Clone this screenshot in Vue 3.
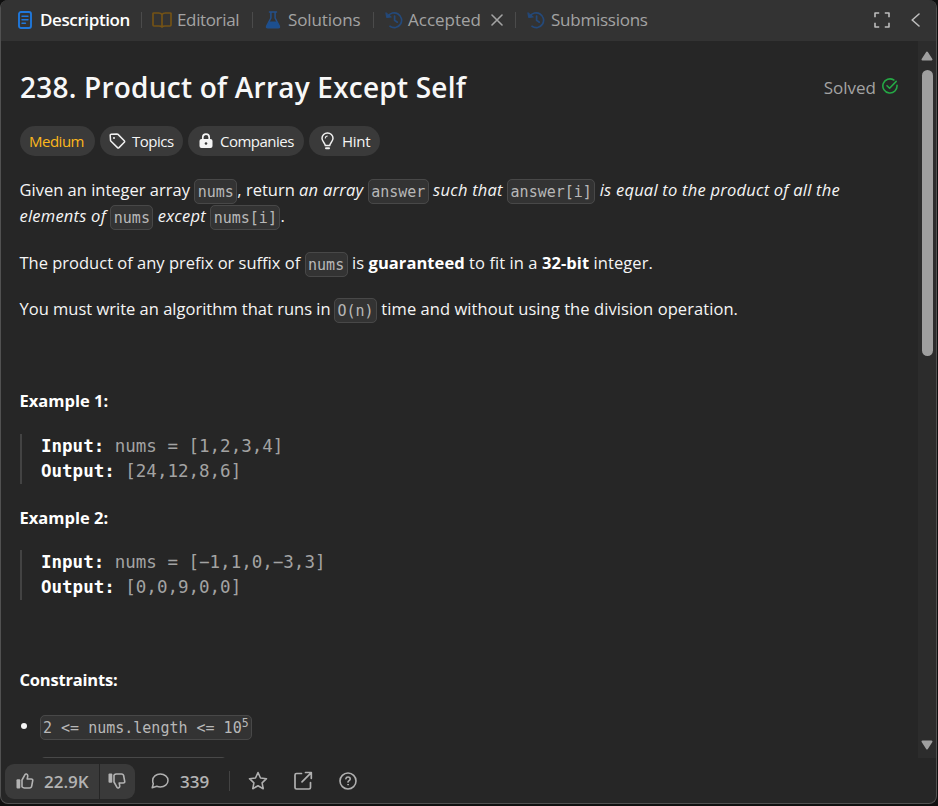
<script setup>
const tabs = [
  { id: 'description', label: 'Description', icon: 'doc', active: true },
  { id: 'editorial', label: 'Editorial', icon: 'book' },
  { id: 'solutions', label: 'Solutions', icon: 'flask' },
  { id: 'accepted', label: 'Accepted', icon: 'history', closable: true },
  { id: 'submissions', label: 'Submissions', icon: 'history' },
]
const examples = [
  { n: 1, input: 'nums = [1,2,3,4]', output: '[24,12,8,6]' },
  { n: 2, input: 'nums = [−1,1,0,−3,3]', output: '[0,0,9,0,0]' },
]
</script>

<template>
  <div class="page">
    <div class="panel">
      <header class="tabbar">
        <div v-for="t in tabs" :key="t.id" class="tab" :class="[t.id, { active: t.active }]">
          <svg v-if="t.icon === 'doc'" class="ic-doc" viewBox="0 0 14 18" fill="none" stroke="#1f78dc" stroke-width="1.9" stroke-linecap="round">
            <rect x="1" y="1" width="12" height="16" rx="2" />
            <path d="M4 5.2h6M4 8.7h6M4 12.2h3.5" stroke-width="1.4" />
          </svg>
          <svg v-else-if="t.icon === 'book'" class="ic-book" viewBox="0 0 20 16" fill="none" stroke="#745316" stroke-width="1.7" stroke-linejoin="round">
            <path d="M10 2.6C9.3 1.3 8 1 6.6 1H1.9Q1 1 1 1.9v11.2q0 .9.9.9h5c1.5 0 2.5.3 3.1 1.1.6-.8 1.6-1.1 3.1-1.1h5q.9 0 .9-.9V1.9Q19 1 18.1 1h-4.7C12 1 10.7 1.3 10 2.6ZM10 2.6V15" />
          </svg>
          <svg v-else-if="t.icon === 'flask'" class="ic-flask" viewBox="0 0 16 18">
            <path d="M4.500 1h7M5.900 1v6L1.700 15.200Q1.100 16.800 2.600 16.800h10.800q1.500 0 .9-1.600L10.100 7V1" fill="none" stroke="#24508a" stroke-width="1.500" stroke-linecap="round" stroke-linejoin="round" />
            <path d="M4.200 10.500h7.600l2.500 5q.3 1.300-.9 1.300H2.600q-1.200 0-.9-1.300Z" fill="#1c4f8f" />
          </svg>
          <svg v-else class="ic-history" viewBox="0 0 18 18" fill="none" stroke="#24497a" stroke-width="1.700" stroke-linecap="round" stroke-linejoin="round">
            <path d="M2.800 5.500A7.400 7.400 0 1 1 5 15.300" />
            <path d="M9.600 5v4.300l2.700 1.900" />
            <path d="M.9 2l.7 4.500 4.400-.5Z" fill="#24497a" stroke-width="1" />
          </svg>
          <span class="tab-label">{{ t.label }}</span>
          <svg v-if="t.closable" class="ic-close" viewBox="0 0 12 12" stroke="#a3a3a3" stroke-width="1.600" stroke-linecap="round"><path d="M1 1l10 10M11 1L1 11" /></svg>
        </div>
        <div class="tab-actions">
          <svg class="ic-full" viewBox="0 0 16 16" fill="none" stroke="#bdbdbd" stroke-width="1.600" stroke-linejoin="round"><path d="M1 5.200V1h4.200M10.800 1H15v4.200M15 10.800V15h-4.200M5.200 15H1v-4.200" /></svg>
          <svg class="ic-chev" viewBox="0 0 9 14" fill="none" stroke="#bdbdbd" stroke-width="1.600" stroke-linecap="round" stroke-linejoin="round"><path d="M8 1L1.200 7 8 13" /></svg>
        </div>
      </header>

      <div class="viewport">
        <main class="content">
          <div class="title-row">
            <h1>238. Product of Array Except Self</h1>
            <div class="solved">
              <span>Solved</span>
              <svg viewBox="0 0 16 16" fill="none" stroke="#25a845" stroke-width="1.600" stroke-linecap="round" stroke-linejoin="round"><path d="M11.800 2A7.100 7.100 0 1 0 15 7.200" /><path d="M5 7.700l2.600 2.600 6.600-6.900" /></svg>
            </div>
          </div>

          <div class="tags">
            <span class="tag medium">Medium</span>
            <span class="tag topics">
              <svg viewBox="0 0 17 17" fill="none" stroke="#f0f0f0" stroke-width="1.500" stroke-linejoin="round"><path d="M2 1.300l6-.3q.6 0 1 .4l6.300 6.300q.7.8 0 1.500L10 14.600q-.8.700-1.500 0L2 8.300q-.4-.4-.5-1L1.200 2.200Q1.200 1.300 2 1.300Z" /><circle cx="5" cy="4.900" r="1" fill="#f0f0f0" stroke="none" /></svg>
              Topics
            </span>
            <span class="tag companies">
              <svg viewBox="0 0 14 16"><path d="M3.800 7V4.300a3.200 3.200 0 0 1 6.400 0V7" fill="none" stroke="#f5f5f5" stroke-width="1.700" /><rect x=".5" y="6" width="13" height="9" rx="2" fill="#f5f5f5" /><circle cx="7" cy="10.500" r="1.300" fill="#3a3a3a" /></svg>
              Companies
            </span>
            <span class="tag hint">
              <svg viewBox="0 0 13 18" fill="none" stroke="#f0f0f0" stroke-width="1.500" stroke-linecap="round"><path d="M4.300 13.600C4.100 11 1 9.600 1 6.200a5.500 5.200 0 0 1 11 0c0 3.400-3.100 4.800-3.300 7.400Z" stroke-linejoin="round" /><path d="M4.300 6A2.300 2.300 0 0 1 6.200 4" stroke-width="1.200" /><path d="M5 16.300h3" stroke-width="2" /></svg>
              Hint
            </span>
          </div>

          <article class="prose">
            <p>Given an integer array <code>nums</code>, return <em>an array</em> <code>answer</code> <em>such that</em> <code>answer[i]</code> <em>is equal to the product of all the<br />elements of</em> <code>nums</code> <em>except</em> <code>nums[i]</code>.</p>
            <p>The product of any prefix or suffix of <code>nums</code> <span class="wide">is <strong>guaranteed</strong> to fit in a <strong>32-bit</strong> integer.</span></p>
            <p>You must write an algorithm that runs in <code class="tight">O(n)</code> <span class="wide">time and without using the division operation.</span></p>
            <p>&nbsp;</p>
            <template v-for="e in examples" :key="e.n">
              <p><strong>Example {{ e.n }}:</strong></p>
              <pre><strong>Input:</strong> {{ e.input }}
<strong>Output:</strong> {{ e.output }}</pre>
            </template>
            <p>&nbsp;</p>
            <p><strong class="heading">Constraints:</strong></p>
            <ul>
              <li><code>2 &lt;= nums.length &lt;= 10<sup>5</sup></code></li>
              <li><code>-30 &lt;= nums[i] &lt;= 30</code></li>
            </ul>
          </article>
        </main>
        <div class="scrollbar">
          <svg class="arrow" viewBox="0 0 12 10"><path d="M6 1.500L10.500 8.500h-9Z" fill="#9f9f9f" stroke="#9f9f9f" stroke-width="2" stroke-linejoin="round" /></svg>
          <div class="thumb"></div>
          <svg class="arrow down" viewBox="0 0 12 10"><path d="M6 8.500L10.500 1.500h-9Z" fill="#9f9f9f" stroke="#9f9f9f" stroke-width="2" stroke-linejoin="round" /></svg>
        </div>
      </div>

      <footer class="footer">
        <div class="votes">
          <button class="up">
            <svg viewBox="0 0 18 16"><path d="M6 7l3-5.300q.5-.9 1.500-.6 1.500.5 1.200 2.200L11.200 6h4q1.800 0 1.500 1.700l-1 5.300q-.3 2-2.200 2H8.500Q7 15 6 13.800Z" fill="none" stroke="#b3b3b3" stroke-width="1.600" stroke-linejoin="round" /><rect x=".5" y="6.300" width="3.800" height="9.200" rx="1" fill="#b3b3b3" /></svg>
            <span>22.9K</span>
          </button>
          <button class="down-vote">
            <svg viewBox="0 0 18 16"><path d="M6 9l3 5.300q.5.900 1.500.6 1.500-.5 1.200-2.200L11.200 10h4q1.800 0 1.500-1.700l-1-5.300q-.3-2-2.200-2H8.500Q7 1 6 2.200Z" fill="none" stroke="#b3b3b3" stroke-width="1.600" stroke-linejoin="round" /><rect x=".5" y=".5" width="3.800" height="9.200" rx="1" fill="#b3b3b3" /></svg>
          </button>
        </div>
        <div class="comments">
          <svg viewBox="0 0 18 16" fill="none" stroke="#b0b0b0" stroke-width="1.500" stroke-linejoin="round"><path d="M2.300 10.700A7 6.400 0 0 1 1.700 7.400C1.700 3.800 5 1 9.300 1S17 3.800 17 7.500s-3.400 6.500-7.700 6.500q-1.800 0-3.500-.7L1.200 14.700Z" /></svg>
          <span>339</span>
        </div>
        <div class="rule"></div>
        <div class="actions">
          <svg viewBox="0 0 20 20" fill="none" stroke="#b0b0b0" stroke-width="1.600" stroke-linejoin="round"><path d="M10 1.500l2.500 5.500 6 .7-4.400 4.100 1.100 5.900L10 14.800l-5.200 2.900 1.100-5.900L1.500 7.700l6-.7Z" /></svg>
          <svg viewBox="0 0 20 20" fill="none" stroke="#b0b0b0" stroke-width="1.700" stroke-linecap="round" stroke-linejoin="round"><path d="M8.500 2.500H3.500Q2 2.500 2 4v12.500Q2 18 3.500 18H16q1.500 0 1.500-1.500v-5M12.500 1.500H18.300V7.300M18 1.800L9 10.800" /></svg>
          <svg viewBox="0 0 20 20" fill="none" stroke="#b0b0b0" stroke-width="1.600" stroke-linecap="round"><circle cx="10" cy="10" r="8" /><path d="M7.900 7.700c.2-1.200 1-1.700 2.100-1.700s2.200.7 2.200 1.900c0 1.600-2.200 1.700-2.200 3.200" /><circle cx="10" cy="13.700" r=".4" fill="#b0b0b0" stroke-width="1" /></svg>
        </div>
      </footer>
    </div>
  </div>
</template>

<style>
body {
  background: #0f0f0f;
}
</style>

<style scoped>
.page {
  box-sizing: border-box;
  width: 938px;
  height: 806px;
  padding: 0 1px 2px 0;
  overflow: hidden;
  font-family: "Open Sans", "Noto Sans", sans-serif;
  color: #f5f5f5;
}
.panel {
  box-sizing: border-box;
  height: 804px;
  display: flex;
  flex-direction: column;
  border: 1px solid #515151;
  border-top: 0;
  border-radius: 8px;
  background: #262626;
  overflow: hidden;
}
svg {
  display: block;
  flex: none;
}
.tabbar {
  display: flex;
  align-items: center;
  height: 41px;
  flex: none;
  box-sizing: border-box;
  padding: 0 16px 2px 17px;
  background: #333;
}
.tab {
  display: flex;
  align-items: center;
  font-size: 17px;
  line-height: 24px;
  color: #a3a3a3;
}
.tab + .tab::before {
  content: "";
  width: 1px;
  height: 16px;
  background: #4b4b4b;
}
.active {
  font-weight: 600;
  color: #fff;
}
.tab-label {
  white-space: nowrap;
}
.description .tab-label { width: 101px; margin-left: 8px; letter-spacing: -0.39px; }
.editorial .tab-label { width: 75px; margin-left: 5px; letter-spacing: -0.36px; }
.solutions .tab-label { width: 85px; margin-left: 7px; letter-spacing: -0.1px; }
.accepted .tab-label { width: 83px; margin-left: 5px; }
.submissions .tab-label { margin-left: 6px; letter-spacing: -0.25px; }
.ic-doc { width: 14px; height: 18px; }
.ic-book { width: 20px; height: 16px; margin-left: 10px; }
.ic-flask { width: 16px; height: 18px; margin-left: 12px; }
.ic-history { width: 18px; height: 18px; margin-left: 11px; }
.submissions .ic-history { margin-left: 11px; }
.ic-close { width: 12px; height: 12px; margin-right: 12px; }
.tab-actions {
  display: flex;
  align-items: center;
  gap: 21px;
  margin-left: auto;
}
.ic-full { width: 16px; height: 16px; }
.ic-chev { width: 9px; height: 14px; }

.viewport {
  display: flex;
  height: 717px;
  flex: none;
  overflow: hidden;
}
.content {
  flex: 1;
  min-width: 0;
  padding: 24px 20px 0 19px;
}
.title-row {
  display: flex;
  align-items: center;
  justify-content: space-between;
  height: 44px;
}
h1 {
  margin: 0;
  font-size: 28px;
  font-weight: 600;
  line-height: 44px;
  letter-spacing: 0.22px;
  color: #f8f8f8;
}
.solved {
  display: flex;
  align-items: center;
  gap: 6px;
  font-size: 17px;
  color: #a3a3a3;
}
.solved svg {
  width: 16px;
  height: 16px;
  margin-bottom: 3px;
}
.tags {
  display: flex;
  gap: 5px;
  margin: 17px 0 21px;
}
.tag {
  box-sizing: border-box;
  display: flex;
  align-items: center;
  height: 30px;
  border-radius: 15px;
  padding-left: 9px;
  background: #3a3a3a;
  font-size: 15px;
  letter-spacing: -0.5px;
  color: #f5f5f5;
}
.medium { width: 75px; color: #fdb71c; }
.topics { width: 83px; }
.companies { width: 116px; padding-left: 11px; }
.hint { width: 71px; padding-left: 12px; letter-spacing: -0.3px; }
.topics svg { width: 17px; height: 17px; margin: 0 6px 0 0; }
.companies svg { width: 14px; height: 16px; margin-right: 7px; }
.hint svg { width: 13px; height: 18px; margin-right: 8px; }

.prose {
  margin-left: -0.5px;
  font-size: 16.5px;
  line-height: 26.25px;
}
.prose p {
  margin: 0 0 20px;
  white-space: nowrap;
}
em { letter-spacing: 0.23px; }
.wide { letter-spacing: 0.07px; }
.prose strong { color: #fff; }
.prose .heading { letter-spacing: -0.2px; }
code {
  padding: 3px 2.5px 2px;
  border: 1px solid #484848;
  border-radius: 5px;
  background: #333;
  font-family: "DejaVu Sans Mono", monospace;
  font-size: 15px;
  font-style: normal;
  line-height: 1;
  letter-spacing: 0;
  vertical-align: -1px;
  color: #b8b8b8;
}
.tight { margin-left: -1px; }
pre {
  margin: -1px 0 21px;
  padding-left: 19.5px;
  border-left: 2px solid #434343;
  font-family: "DejaVu Sans Mono", monospace;
  font-size: 17.5px;
  line-height: 25px;
  color: #a3a3a3;
}
ul {
  margin: 0;
  padding-left: 20px;
}
li {
  margin-bottom: 15px;
}
sup {
  font-size: 11.5px;
  line-height: 0;
  vertical-align: 6px;
}

.scrollbar {
  display: flex;
  flex-direction: column;
  align-items: center;
  width: 18px;
  padding: 10px 0 8px;
  box-sizing: border-box;
  background: #2c2c2c;
}
.arrow { width: 12px; height: 10px; }
.thumb {
  width: 11px;
  height: 286px;
  margin-top: 9px;
  border-radius: 6px;
  background: #9f9f9f;
}
.down { margin-top: auto; }

.footer {
  display: flex;
  align-items: center;
  flex: 1;
  padding: 1px 0 0 4px;
  color: #b3b3b3;
  font-size: 17px;
  font-weight: 600;
}
.votes {
  display: flex;
  gap: 1px;
  border-radius: 9px;
  overflow: hidden;
}
button {
  box-sizing: border-box;
  display: flex;
  align-items: center;
  height: 35px;
  padding: 0;
  border: 0;
  background: #3a3a3a;
  color: inherit;
  font: inherit;
}
.up { width: 94px; padding-left: 11px; }
.up svg, .down-vote svg { width: 18px; height: 16px; }
.up span { margin-left: 10px; }
.down-vote { width: 35px; padding-left: 8px; }
.comments {
  display: flex;
  align-items: center;
  width: 78px;
  margin-left: 16px;
}
.comments svg { width: 18px; height: 16px; }
.comments span { margin-left: 11px; }
.rule {
  width: 1px;
  height: 20px;
  background: #434343;
}
.actions {
  display: flex;
  gap: 25px;
  margin-left: 18px;
}
.actions svg { width: 20px; height: 20px; }
</style>
